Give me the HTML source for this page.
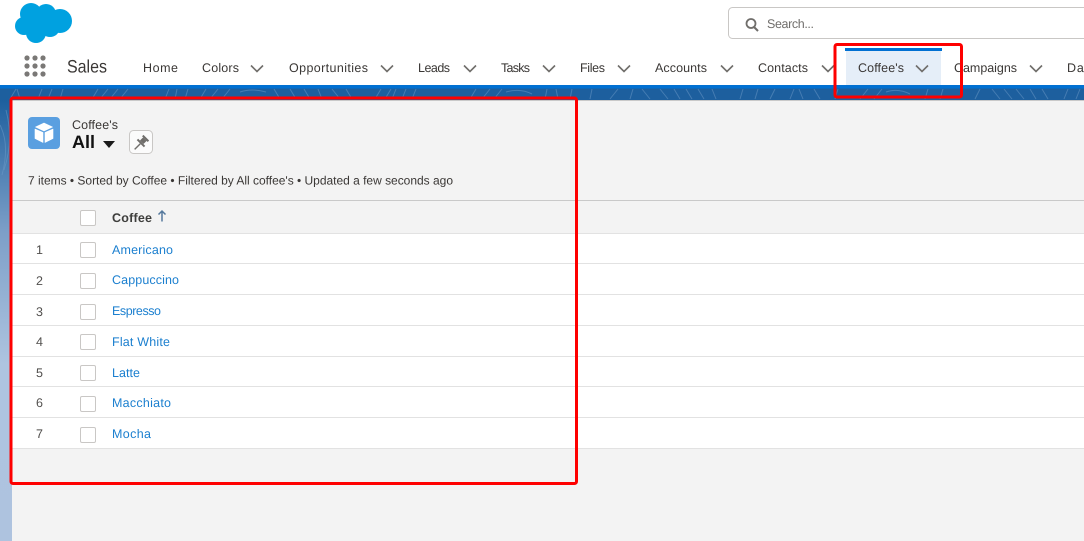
<!DOCTYPE html>
<html><head><meta charset="utf-8"><style>
html,body{margin:0;padding:0;width:1084px;height:541px;overflow:hidden;background:#f3f3f3}
svg{display:block}
text{font-family:"Liberation Sans",sans-serif;font-size:12.500px;fill:#3a3735;text-rendering:geometricPrecision}
.l{fill:#1b7fcf}
.c{fill:none;stroke:#706e6b;stroke-width:1.6}
.b{fill:#fff;stroke:#c9c7c5;stroke-width:1}
.p{fill:none;stroke:#6f9cc8;stroke-width:1;opacity:.5}
</style></head><body>
<svg width="1084" height="541" viewBox="0 0 1084 541" xmlns="http://www.w3.org/2000/svg">
<defs><linearGradient id="g" x1="0" y1="0" x2="0" y2="1"><stop offset="0" stop-color="#1d5f9e"/><stop offset=".3" stop-color="#7d9fc8"/><stop offset=".6" stop-color="#aec4e0"/><stop offset="1" stop-color="#aec3df"/></linearGradient></defs>
<rect width="1084" height="541" fill="#f3f3f3"/>
<rect x="0" y="100" width="12" height="441" fill="url(#g)"/>
<rect width="1084" height="85" fill="#fff"/>
<rect y="85" width="1084" height="3.500" fill="#0070d2"/>
<rect y="88.500" width="1084" height="11.500" fill="#1d5f9e"/>
<rect y="100" x="12" width="1072" height="1" fill="#c9c9c9"/>
<path class="p" d="M10 99l6-10M20 99l-3-10M38 99l4-10M48 99l4-10M60 99l3-10M92 99l6-10M100 99l8-10M110 99l8-10M120 99l8-10M165 99l4-10M175 99l2-10M185 99l3-10M200 99l6-10M210 99l8-10M222 99l8-10M240 92q12-4 26 0M280 99l-6-10M296 99l-6-10M310 99l-6-10M322 99l-4-10M340 99l-8-10M352 99l-6-10M375 99l6-10M385 99l6-10M392 99l4-10M402 99l4-10M412 99l4-10M470 99l6-10M482 99l8-10M494 99l8-10M506 92q14-4 26 2M545 99l2-10M558 99l-2-10M570 99l2-10M590 99l2-10M610 99l8-10M630 99l3-10M650 99l-8-10M668 99l-8-10M680 99l-6-10M692 99l-6-10M704 99l-6-10M716 99l-4-10M740 99l3-10M755 99l3-10M770 99l5-10M790 99l4-10M803 99l-4-10M820 99l-6-10M835 99l3-10M860 99l8-10M874 99l8-10M886 92q12-4 24 2M925 99l3-10M940 99l3-10M975 99l5-10M1000 99l-8-10M1012 99l-8-10M1024 99l-8-10M1036 99l-6-10M1048 99l-6-10M1064 99l4-10M1076 99l4-10"/>
<path class="p" d="M0 125q10 20 2 50M6 110q8 30 -2 60" opacity=".4"/>

<!-- logo -->
<g fill="#00a1e0"><circle cx="31" cy="14" r="11"/><circle cx="46" cy="14" r="10"/><circle cx="60" cy="21" r="12"/><circle cx="24" cy="26" r="9"/><circle cx="36" cy="33" r="10"/><circle cx="50" cy="27" r="10"/><rect x="26" y="12" width="30" height="18"/></g>

<!-- search -->
<rect x="728.500" y="7.500" width="380" height="31" rx="4" fill="#fff" stroke="#c9c7c5"/>
<circle cx="751" cy="23.500" r="4.500" fill="none" stroke="#706e6b" stroke-width="1.800"/><path d="M754 27l4 4" stroke="#706e6b" stroke-width="2"/>
<text x="767" y="28" textLength="47" style="fill:#706e6b">Search...</text>

<!-- app launcher -->
<g fill="#7a7876"><circle cx="27" cy="58" r="2.600"/><circle cx="35" cy="58" r="2.600"/><circle cx="43" cy="58" r="2.600"/><circle cx="27" cy="66" r="2.600"/><circle cx="35" cy="66" r="2.600"/><circle cx="43" cy="66" r="2.600"/><circle cx="27" cy="74" r="2.600"/><circle cx="35" cy="74" r="2.600"/><circle cx="43" cy="74" r="2.600"/></g>
<text x="67" y="72.500" textLength="40" lengthAdjust="spacingAndGlyphs" style="font-size:18px">Sales</text>

<!-- active tab -->
<rect x="846" y="48" width="95" height="37" fill="#e5eef8"/>
<rect x="845" y="48" width="97" height="3" fill="#0070d2"/>

<!-- nav -->
<text x="143" y="72" textLength="35">Home</text>
<text x="202" y="72" textLength="37">Colors</text>
<text x="289" y="72" textLength="79">Opportunities</text>
<text x="418" y="72" textLength="32">Leads</text>
<text x="501" y="72" textLength="29">Tasks</text>
<text x="580" y="72" textLength="25">Files</text>
<text x="655" y="72" textLength="52">Accounts</text>
<text x="758" y="72" textLength="50">Contacts</text>
<text x="858" y="72" textLength="46">Coffee's</text>
<text x="954" y="72" textLength="63">Campaigns</text>
<text x="1067" y="72" textLength="24">Das</text>
<path class="c" d="M251 65.500l6 6 6-6M381 65.500l6 6 6-6M464 65.500l6 6 6-6M543 65.500l6 6 6-6M618 65.500l6 6 6-6M721 65.500l6 6 6-6M822 65.500l6 6 6-6M916 65.500l6 6 6-6M1030 65.500l6 6 6-6"/>

<!-- list header -->
<rect x="28" y="117" width="32" height="32" rx="4" fill="#5a9fe0"/>
<path d="M44 123l8.500 4-8.500 4-8.500-4zM35 129l8 3.500v10l-8-4zM53 129l-8 3.500v10l8-4z" fill="#fff" stroke="#fff" stroke-width=".6" stroke-linejoin="round"/>
<text x="72" y="129" textLength="46">Coffee's</text>
<text x="72" y="148" textLength="23" lengthAdjust="spacingAndGlyphs" style="font-size:18px;font-weight:bold;fill:#111">All</text>
<path d="M103 141h12l-6 7z" fill="#1a1a1a"/>
<rect x="129.500" y="130.500" width="23" height="23" rx="4" fill="#fbfbfb" stroke="#c9c7c5"/>
<g transform="rotate(45 141 143)" fill="#706e6b"><rect x="137" y="135.500" width="8" height="2"/><rect x="138.500" y="137.500" width="5" height="4.500"/><rect x="136" y="142" width="10" height="2"/><rect x="140.300" y="144" width="1.400" height="8"/></g>
<text x="28" y="184.500" textLength="425" style="font-size:12px">7 items • Sorted by Coffee • Filtered by All coffee's • Updated a few seconds ago</text>

<!-- table -->
<rect x="12" y="200" width="1072" height="1" fill="#c9c9c9"/>
<rect x="12" y="234" width="1072" height="214" fill="#fff"/>
<g fill="#e2e2e2"><rect x="12" y="233" width="1072" height="1"/><rect x="12" y="263" width="1072" height="1"/><rect x="12" y="294" width="1072" height="1"/><rect x="12" y="325" width="1072" height="1"/><rect x="12" y="356" width="1072" height="1"/><rect x="12" y="386" width="1072" height="1"/><rect x="12" y="417" width="1072" height="1"/><rect x="12" y="448" width="1072" height="1"/></g>
<rect x="80.500" y="210.500" width="15" height="15" rx="1.500" class="b"/>
<text x="112" y="222" textLength="40" style="font-weight:bold;fill:#3e3e3c">Coffee</text>
<path d="M162 221.500v-10M158.500 214.500l3.500-3.500 3.500 3.500" fill="none" stroke="#54789c" stroke-width="1.500"/>

<g>
<text x="36" y="254" style="fill:#514f4d">1</text>
<text x="36" y="285" style="fill:#514f4d">2</text>
<text x="36" y="316" style="fill:#514f4d">3</text>
<text x="36" y="346" style="fill:#514f4d">4</text>
<text x="36" y="377" style="fill:#514f4d">5</text>
<text x="36" y="407" style="fill:#514f4d">6</text>
<text x="36" y="438" style="fill:#514f4d">7</text>
</g>
<rect x="80.500" y="242.500" width="15" height="15" rx="1.500" class="b"/>
<rect x="80.500" y="273.500" width="15" height="15" rx="1.500" class="b"/>
<rect x="80.500" y="304.500" width="15" height="15" rx="1.500" class="b"/>
<rect x="80.500" y="334.500" width="15" height="15" rx="1.500" class="b"/>
<rect x="80.500" y="365.500" width="15" height="15" rx="1.500" class="b"/>
<rect x="80.500" y="396.500" width="15" height="15" rx="1.500" class="b"/>
<rect x="80.500" y="427.500" width="15" height="15" rx="1.500" class="b"/>
<text class="l" x="112" y="254" textLength="61">Americano</text>
<text class="l" x="112" y="284" textLength="67">Cappuccino</text>
<text class="l" x="112" y="315" textLength="49">Espresso</text>
<text class="l" x="112" y="346" textLength="58">Flat White</text>
<text class="l" x="112" y="377" textLength="28">Latte</text>
<text class="l" x="112" y="407" textLength="59">Macchiato</text>
<text class="l" x="112" y="438" textLength="39">Mocha</text>

<!-- red highlights -->
<rect x="11" y="98" width="565.500" height="385.500" rx="2" fill="none" stroke="#fe0000" stroke-width="3"/>
<rect x="835" y="44.500" width="126.500" height="52.500" rx="2" fill="none" stroke="#fe0000" stroke-width="3"/>
</svg>
</body></html>
